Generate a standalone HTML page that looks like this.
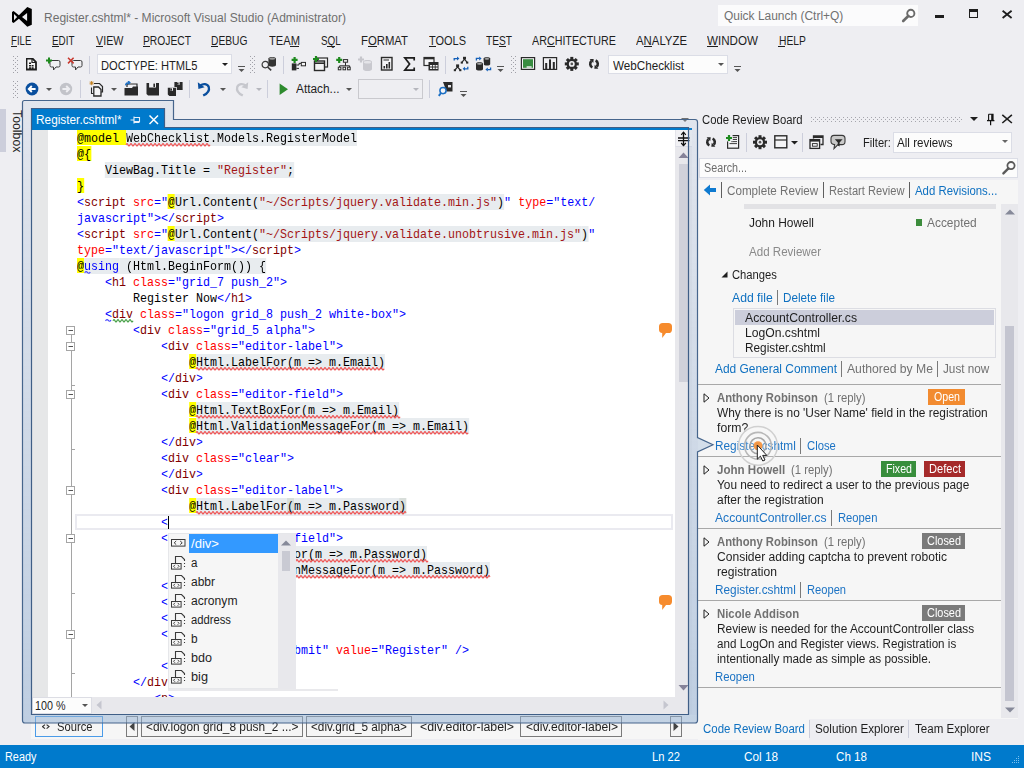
<!DOCTYPE html>
<html><head><meta charset="utf-8"><title>Register.cshtml - Microsoft Visual Studio</title>
<style>
html,body{margin:0;padding:0}
body{width:1024px;height:768px;overflow:hidden;background:#eeeef2;position:relative;font-family:"Liberation Sans",sans-serif;}
.t{position:absolute;white-space:nowrap;line-height:1;transform-origin:0 0;display:block}
.r{position:absolute;box-sizing:border-box}
.cl{position:absolute;left:77px;height:16px;line-height:16px;white-space:pre;font-family:"Liberation Mono",monospace;font-size:13px;transform-origin:0 0;transform:scaleX(0.8974);color:#000}
.cl span{display:inline-block;height:16px;vertical-align:top;line-height:18px;overflow:hidden}
.y{background:#ffff00;height:15px !important}.g{background:#e8ecef}.h{background:#d8deda}
.b{color:#0000ff}.m{color:#800000}.a{color:#ff0000}.s{color:#a31515}
</style></head>
<body>
<svg class="r" style="left:10px;top:5px" width="24" height="24" viewBox="0 0 24 24"><path d="M2 7 L3.6 6 L8.9 10.3 L17.3 1.9 L21.8 4 V19.7 L17.3 21.8 L8.9 13.7 L3.6 18 L2 17 Z M4 9.1 L7.1 12 L4 15.2 Z M12 12 L17.1 8.1 V16.1 Z" fill="#000" fill-rule="evenodd"/></svg>
<span class="t" style="left:44.3px;top:12.00px;font-size:12.5px;color:#6e6e6e;transform:scaleX(0.9625);">Register.cshtml* - Microsoft Visual Studio (Administrator)</span>
<div class="r" style="left:718px;top:5px;width:200px;height:21px;background:#fbfbfc;"></div>
<span class="t" style="left:723.7px;top:10.00px;font-size:12.5px;color:#717171;transform:scaleX(0.9568);">Quick Launch (Ctrl+Q)</span>
<svg class="r" style="left:901px;top:8px" width="16" height="15" viewBox="0 0 16 15"><circle cx="9.8" cy="5.4" r="3.6" fill="none" stroke="#6a6a6a" stroke-width="1.9"/><path d="M7.3 8 L2.2 13" stroke="#6a6a6a" stroke-width="2.6" stroke-linecap="round"/></svg>
<div class="r" style="left:935px;top:15px;width:9px;height:3px;background:#1e1e1e;"></div>
<div class="r" style="left:969px;top:9px;width:9px;height:9px;background:transparent;border:1px solid #1e1e1e;border-top:3px solid #1e1e1e"></div>
<svg class="r" style="left:1001px;top:10px" width="12" height="9" viewBox="0 0 12 9"><path d="M1.6 0.8 L10.6 8 M10.6 0.8 L1.6 8" stroke="#1e1e1e" stroke-width="1.8"/></svg>
<span class="t" style="left:11.3px;top:35.00px;font-size:12.5px;color:#1e1e1e;transform:scaleX(0.7697);">FILE</span>
<div class="r" style="left:11px;top:46px;width:6px;height:1px;background:#1e1e1e;"></div>
<span class="t" style="left:52.0px;top:35.00px;font-size:12.5px;color:#1e1e1e;transform:scaleX(0.7895);">EDIT</span>
<div class="r" style="left:52px;top:46px;width:7px;height:1px;background:#1e1e1e;"></div>
<span class="t" style="left:95.6px;top:35.00px;font-size:12.5px;color:#1e1e1e;transform:scaleX(0.8579);">VIEW</span>
<div class="r" style="left:96px;top:46px;width:7px;height:1px;background:#1e1e1e;"></div>
<span class="t" style="left:143.0px;top:35.00px;font-size:12.5px;color:#1e1e1e;transform:scaleX(0.8232);">PROJECT</span>
<div class="r" style="left:143px;top:46px;width:7px;height:1px;background:#1e1e1e;"></div>
<span class="t" style="left:211.0px;top:35.00px;font-size:12.5px;color:#1e1e1e;transform:scaleX(0.8214);">DEBUG</span>
<div class="r" style="left:211px;top:46px;width:7px;height:1px;background:#1e1e1e;"></div>
<span class="t" style="left:268.6px;top:35.00px;font-size:12.5px;color:#1e1e1e;transform:scaleX(0.8921);">TEAM</span>
<div class="r" style="left:290px;top:46px;width:9px;height:1px;background:#1e1e1e;"></div>
<span class="t" style="left:320.7px;top:35.00px;font-size:12.5px;color:#1e1e1e;transform:scaleX(0.7880);">SQL</span>
<div class="r" style="left:327px;top:46px;width:8px;height:1px;background:#1e1e1e;"></div>
<span class="t" style="left:361.0px;top:35.00px;font-size:12.5px;color:#1e1e1e;transform:scaleX(0.9060);">FORMAT</span>
<div class="r" style="left:368px;top:46px;width:9px;height:1px;background:#1e1e1e;"></div>
<span class="t" style="left:429.0px;top:35.00px;font-size:12.5px;color:#1e1e1e;transform:scaleX(0.8783);">TOOLS</span>
<div class="r" style="left:429px;top:46px;width:7px;height:1px;background:#1e1e1e;"></div>
<span class="t" style="left:486.0px;top:35.00px;font-size:12.5px;color:#1e1e1e;transform:scaleX(0.8141);">TEST</span>
<div class="r" style="left:499px;top:46px;width:7px;height:1px;background:#1e1e1e;"></div>
<span class="t" style="left:532.0px;top:35.00px;font-size:12.5px;color:#1e1e1e;transform:scaleX(0.8577);">ARCHITECTURE</span>
<div class="r" style="left:547px;top:46px;width:8px;height:1px;background:#1e1e1e;"></div>
<span class="t" style="left:636.0px;top:35.00px;font-size:12.5px;color:#1e1e1e;transform:scaleX(0.9097);">ANALYZE</span>
<div class="r" style="left:644px;top:46px;width:8px;height:1px;background:#1e1e1e;"></div>
<span class="t" style="left:707.0px;top:35.00px;font-size:12.5px;color:#1e1e1e;transform:scaleX(0.9294);">WINDOW</span>
<div class="r" style="left:707px;top:46px;width:11px;height:1px;background:#1e1e1e;"></div>
<span class="t" style="left:778.5px;top:35.00px;font-size:12.5px;color:#1e1e1e;transform:scaleX(0.8245);">HELP</span>
<div class="r" style="left:778px;top:46px;width:7px;height:1px;background:#1e1e1e;"></div>
<svg class="r" style="left:13px;top:56px" width="6" height="18" viewBox="0 0 6 18"><rect x="0" y="0" width="1" height="1" fill="#a0a0a8"/><rect x="4" y="0" width="1" height="1" fill="#a0a0a8"/><rect x="2" y="2" width="1" height="1" fill="#a0a0a8"/><rect x="0" y="4" width="1" height="1" fill="#a0a0a8"/><rect x="4" y="4" width="1" height="1" fill="#a0a0a8"/><rect x="2" y="6" width="1" height="1" fill="#a0a0a8"/><rect x="0" y="8" width="1" height="1" fill="#a0a0a8"/><rect x="4" y="8" width="1" height="1" fill="#a0a0a8"/><rect x="2" y="10" width="1" height="1" fill="#a0a0a8"/><rect x="0" y="12" width="1" height="1" fill="#a0a0a8"/><rect x="4" y="12" width="1" height="1" fill="#a0a0a8"/><rect x="2" y="14" width="1" height="1" fill="#a0a0a8"/><rect x="0" y="16" width="1" height="1" fill="#a0a0a8"/><rect x="4" y="16" width="1" height="1" fill="#a0a0a8"/></svg>
<svg class="r" style="left:26px;top:58px" width="11" height="13" viewBox="0 0 11 13"><path d="M0.5 0.5 H6.5 L10 4 V11.5 H0.5 Z" fill="#f6f6f6" stroke="#1e1e1e" stroke-width="1.8"/><path d="M6 0.5 V4.5 H10" fill="none" stroke="#1e1e1e" stroke-width="1.2"/><path d="M3 4.5h2v1.6h-2z M3 7h2v1.6h-2z M5.6 7h2v1.6h-2z M3 9.3h2v1.6h-2z M5.6 9.3h2v1.6h-2z" fill="#1e1e1e"/></svg>
<svg class="r" style="left:45px;top:57px" width="17" height="15" viewBox="0 0 17 15"><path d="M6.5 3.5 H13.5 Q15.0 3.5 15.0 5.0 V8.5 Q15.0 10.0 13.5 10.0 H11.0 L8.5 13.0 V10.0 H6.5 Q5.0 10.0 5.0 8.5 V5.0 Q5.0 3.5 6.5 3.5 Z" fill="#f0f0f3" stroke="#3c3c3c" stroke-width="1"/><path d="M1 3.5 H7 M4 0.5 V6.5" stroke="#1e8a1e" stroke-width="2"/></svg>
<svg class="r" style="left:67px;top:57px" width="17" height="15" viewBox="0 0 17 15"><path d="M6.5 3.5 H13.5 Q15.0 3.5 15.0 5.0 V8.5 Q15.0 10.0 13.5 10.0 H11.0 L8.5 13.0 V10.0 H6.5 Q5.0 10.0 5.0 8.5 V5.0 Q5.0 3.5 6.5 3.5 Z" fill="#f0f0f3" stroke="#3c3c3c" stroke-width="1"/><path d="M1 0.8 L6.6 6.4 M6.6 0.8 L1 6.4" stroke="#c8372d" stroke-width="1.5"/></svg>
<div class="r" style="left:89px;top:56px;width:1px;height:18px;background:#cccedb;"></div>
<div class="r" style="left:97px;top:54px;width:135px;height:20px;background:#fcfcfc;border:1px solid #dbdde6"></div>
<span class="t" style="left:101.0px;top:60.00px;font-size:12.5px;color:#1e1e1e;transform:scaleX(0.8904);">DOCTYPE: HTML5</span>
<svg class="r" style="left:222px;top:63px" width="6" height="4" viewBox="0 0 6 4"><path d="M0 0 H6 L3.0 3.0 Z" fill="#1e1e1e"/></svg>
<svg class="r" style="left:238px;top:66px" width="8" height="8" viewBox="0 0 8 8"><path d="M0 0.5 H7" stroke="#555" stroke-width="1"/><path d="M0.5 3 H6.5 L3.5 6 Z" fill="#555"/></svg>
<svg class="r" style="left:250px;top:56px" width="6" height="18" viewBox="0 0 6 18"><rect x="0" y="0" width="1" height="1" fill="#a0a0a8"/><rect x="4" y="0" width="1" height="1" fill="#a0a0a8"/><rect x="2" y="2" width="1" height="1" fill="#a0a0a8"/><rect x="0" y="4" width="1" height="1" fill="#a0a0a8"/><rect x="4" y="4" width="1" height="1" fill="#a0a0a8"/><rect x="2" y="6" width="1" height="1" fill="#a0a0a8"/><rect x="0" y="8" width="1" height="1" fill="#a0a0a8"/><rect x="4" y="8" width="1" height="1" fill="#a0a0a8"/><rect x="2" y="10" width="1" height="1" fill="#a0a0a8"/><rect x="0" y="12" width="1" height="1" fill="#a0a0a8"/><rect x="4" y="12" width="1" height="1" fill="#a0a0a8"/><rect x="2" y="14" width="1" height="1" fill="#a0a0a8"/><rect x="0" y="16" width="1" height="1" fill="#a0a0a8"/><rect x="4" y="16" width="1" height="1" fill="#a0a0a8"/></svg>
<svg class="r" style="left:261px;top:56px" width="16" height="16" viewBox="0 0 16 16"><path d="M7.4 2.6 C7.4 1.4 9 0.9 11.2 0.9 C13.4 0.9 15 1.4 15 2.6 V9 C15 10.2 13.4 10.7 11.2 10.7 C9 10.7 7.4 10.2 7.4 9 Z" fill="#333"/><ellipse cx="11.2" cy="2.7" rx="3" ry="1.1" fill="#9a9a9a"/><circle cx="4.3" cy="8.6" r="3.2" fill="#efeff2" stroke="#3a3a3a" stroke-width="1.2"/><path d="M6.6 11 L10.2 14.4" stroke="#3a3a3a" stroke-width="1.6"/></svg>
<div class="r" style="left:283px;top:56px;width:1px;height:18px;background:#cccedb;"></div>
<svg class="r" style="left:291px;top:56px" width="16" height="16" viewBox="0 0 16 16"><path d="M0.6 3.9 H6.6 M3.6 0.8999999999999999 V6.9" stroke="#1e8a1e" stroke-width="2.2"/><rect x="0.8" y="7.4" width="4.6" height="7" fill="#2a2a2a"/><path d="M5.4 9 H8 V7.4 H10 M5.4 12.4 H8" stroke="#2a2a2a" fill="none" stroke-width="1"/><rect x="10.3" y="6.4" width="4.2" height="3.4" fill="#f4f4f6" stroke="#2a2a2a" stroke-width="1"/></svg>
<svg class="r" style="left:313px;top:56px" width="16" height="16" viewBox="0 0 16 16"><rect x="4.5" y="2" width="10" height="9" fill="#f4f4f6" stroke="#2a2a2a" stroke-width="1.2"/><rect x="1.5" y="5" width="10" height="9.5" fill="#f4f4f6" stroke="#2a2a2a" stroke-width="1.4"/><path d="M2 7.2 H11" stroke="#2a2a2a" stroke-width="1.6"/><path d="M0 3.0 H6 M3 0.0 V6.0" stroke="#1e8a1e" stroke-width="2.2"/></svg>
<svg class="r" style="left:336px;top:56px" width="15" height="16" viewBox="0 0 15 16"><path d="M0.2 3.9 H6.2 M3.2 0.8999999999999999 V6.9" stroke="#1e8a1e" stroke-width="2.2"/><rect x="7.4" y="3.6" width="4.2" height="2.6" fill="#f4f4f6" stroke="#2a2a2a" stroke-width="1"/><path d="M9.5 6.4 V9.8 M3.6 11 V9.8 H13.6 V11" stroke="#2a2a2a" fill="none" stroke-width="1"/><rect x="2.3" y="11.2" width="2.6" height="2.6" fill="#f4f4f6" stroke="#2a2a2a" stroke-width="1"/><rect x="7" y="11.2" width="2.6" height="2.6" fill="#f4f4f6" stroke="#2a2a2a" stroke-width="1"/><rect x="11.6" y="11.2" width="2.6" height="2.6" fill="#f4f4f6" stroke="#2a2a2a" stroke-width="1"/></svg>
<svg class="r" style="left:358px;top:56px" width="15" height="16" viewBox="0 0 15 16"><path d="M0 3.5 H6 M3 0.5 V6.5" stroke="#c6c6cc" stroke-width="2.2"/><path d="M5 6 C5 4.6 7 4 9.5 4 C12 4 14 4.6 14 6 V13 C14 14.4 12 15 9.5 15 C7 15 5 14.4 5 13 Z" fill="#c9c9cf"/><ellipse cx="9.5" cy="6.2" rx="3.7" ry="1.3" fill="#e4e4e8"/></svg>
<svg class="r" style="left:380px;top:56px" width="14" height="16" viewBox="0 0 14 16"><rect x="1.5" y="1.5" width="10.5" height="12.5" fill="#f4f4f6" stroke="#2a2a2a" stroke-width="1.4"/><path d="M3.5 4 H9" stroke="#2a2a2a"/><rect x="3.5" y="10" width="1.6" height="2.5" fill="#2a2a2a"/><rect x="6" y="8" width="1.6" height="4.5" fill="#2a2a2a"/><rect x="8.5" y="6" width="1.6" height="6.5" fill="#2a2a2a"/></svg>
<svg class="r" style="left:403px;top:56px" width="13" height="16" viewBox="0 0 13 16"><path d="M11.2 4.4 V1.8 H1.8 L6.6 8 L1.8 14.2 H11.2 V11.6" fill="none" stroke="#1e1e1e" stroke-width="1.7"/></svg>
<svg class="r" style="left:423px;top:56px" width="17" height="16" viewBox="0 0 17 16"><rect x="1" y="1.5" width="10" height="8" fill="#f4f4f6" stroke="#2a2a2a" stroke-width="1.2"/><path d="M1 2.4 H11" stroke="#2a2a2a" stroke-width="1.8"/><rect x="5.5" y="6" width="10" height="8.5" fill="#2a2a2a"/><path d="M7 9h2v1.4h-2z M9.8 9h2v1.4h-2z M12.6 9h2v1.4h-2z M7 11.6h2v1.4h-2z M9.8 11.6h2v1.4h-2z M12.6 11.6h2v1.4h-2z" fill="#f4f4f6"/></svg>
<div class="r" style="left:445px;top:56px;width:1px;height:18px;background:#cccedb;"></div>
<svg class="r" style="left:453px;top:56px" width="16" height="16" viewBox="0 0 16 16"><rect x="10.0" y="0.8" width="3" height="2.6" fill="#2a2a2a"/><path d="M11.5 3.2 L8.9 6.3999999999999995 M11.5 3.2 L14.1 6.3999999999999995" stroke="#2a2a2a" stroke-width="1.2" fill="none"/><rect x="7.7" y="5.6" width="2.2" height="2" fill="#2a2a2a"/><rect x="13.1" y="5.6" width="2.2" height="2" fill="#2a2a2a"/><rect x="3.0999999999999996" y="8.4" width="3" height="2.6" fill="#2a2a2a"/><path d="M4.6 10.8 L1.9999999999999996 14.0 M4.6 10.8 L7.199999999999999 14.0" stroke="#2a2a2a" stroke-width="1.2" fill="none"/><rect x="0.7999999999999998" y="13.2" width="2.2" height="2" fill="#2a2a2a"/><rect x="6.199999999999999" y="13.2" width="2.2" height="2" fill="#2a2a2a"/><path d="M1.2 4.6 V2.5999999999999996 H4.2" fill="none" stroke="#1560b8" stroke-width="1.3"/><path d="M4.0 0.5999999999999999 L6.4 2.5999999999999996 L4.0 4.6 Z" fill="#1560b8"/><path d="M14.8 10.8 V12.8 H11.8" fill="none" stroke="#1560b8" stroke-width="1.3"/><path d="M12.0 14.8 L9.600000000000001 12.8 L12.0 10.8 Z" fill="#1560b8"/></svg>
<svg class="r" style="left:475px;top:56px" width="17" height="16" viewBox="0 0 17 16"><path d="M8.6 2.5999999999999996 C8.6 0.7999999999999999 15.2 0.7999999999999999 15.2 2.5999999999999996 V8.2 C15.2 10.0 8.6 10.0 8.6 8.2 Z" fill="#2a2a2a"/><ellipse cx="11.899999999999999" cy="2.8" rx="2.4" ry="0.9" fill="#a9a9a9"/><rect x="0.4" y="5.6" width="8.4" height="9.6" fill="#eeeef2"/><path d="M1 7.6 C1 5.8 8 5.8 8 7.6 V13.2 C8 15.0 1 15.0 1 13.2 Z" fill="#2a2a2a"/><ellipse cx="4.5" cy="7.800000000000001" rx="2.6" ry="0.9" fill="#a9a9a9"/><path d="M1.4 4.4 V2.4 H4.4" fill="none" stroke="#1560b8" stroke-width="1.3"/><path d="M4.199999999999999 0.3999999999999999 L6.6 2.4 L4.199999999999999 4.4 Z" fill="#1560b8"/><path d="M15.6 11.600000000000001 V13.600000000000001 H12.6" fill="none" stroke="#1560b8" stroke-width="1.3"/><path d="M12.8 15.600000000000001 L10.399999999999999 13.600000000000001 L12.8 11.600000000000001 Z" fill="#1560b8"/></svg>
<svg class="r" style="left:497px;top:66px" width="8" height="8" viewBox="0 0 8 8"><path d="M0 0.5 H7" stroke="#555" stroke-width="1"/><path d="M0.5 3 H6.5 L3.5 6 Z" fill="#555"/></svg>
<svg class="r" style="left:511px;top:56px" width="6" height="18" viewBox="0 0 6 18"><rect x="0" y="0" width="1" height="1" fill="#a0a0a8"/><rect x="4" y="0" width="1" height="1" fill="#a0a0a8"/><rect x="2" y="2" width="1" height="1" fill="#a0a0a8"/><rect x="0" y="4" width="1" height="1" fill="#a0a0a8"/><rect x="4" y="4" width="1" height="1" fill="#a0a0a8"/><rect x="2" y="6" width="1" height="1" fill="#a0a0a8"/><rect x="0" y="8" width="1" height="1" fill="#a0a0a8"/><rect x="4" y="8" width="1" height="1" fill="#a0a0a8"/><rect x="2" y="10" width="1" height="1" fill="#a0a0a8"/><rect x="0" y="12" width="1" height="1" fill="#a0a0a8"/><rect x="4" y="12" width="1" height="1" fill="#a0a0a8"/><rect x="2" y="14" width="1" height="1" fill="#a0a0a8"/><rect x="0" y="16" width="1" height="1" fill="#a0a0a8"/><rect x="4" y="16" width="1" height="1" fill="#a0a0a8"/></svg>
<svg class="r" style="left:520px;top:56px" width="16" height="15" viewBox="0 0 16 15"><rect x="1.4" y="1.6" width="13.2" height="11.8" fill="#f4f4f6" stroke="#2a2a2a" stroke-width="1.2"/><rect x="3" y="3.2" width="10" height="8.6" fill="#388c40"/><path d="M6.6 11 H11.6" stroke="#f4f4f6" stroke-width="1.4"/></svg>
<svg class="r" style="left:542px;top:56px" width="16" height="15" viewBox="0 0 16 15"><rect x="1.4" y="1.6" width="13.2" height="11.8" fill="#f0f0f3" stroke="#2a2a2a" stroke-width="1.2"/><rect x="3.2" y="7" width="2" height="6" fill="#2a2a2a"/><rect x="7" y="3.4" width="2" height="9.6" fill="#2a2a2a"/><rect x="10.8" y="6" width="2" height="7" fill="#2a2a2a"/></svg>
<svg class="r" style="left:564px;top:56px" width="16" height="16" viewBox="0 0 16 16"><rect x="-1.5" y="-7" width="3" height="14" fill="#2a2a2a" transform="translate(7.8 7.9) rotate(0.0)"/><rect x="-1.5" y="-7" width="3" height="14" fill="#2a2a2a" transform="translate(7.8 7.9) rotate(45.0)"/><rect x="-1.5" y="-7" width="3" height="14" fill="#2a2a2a" transform="translate(7.8 7.9) rotate(90.0)"/><rect x="-1.5" y="-7" width="3" height="14" fill="#2a2a2a" transform="translate(7.8 7.9) rotate(135.0)"/><circle cx="7.8" cy="7.9" r="5.18" fill="#2a2a2a"/><circle cx="7.8" cy="7.9" r="2.94" fill="#f1f1f4"/><circle cx="7.8" cy="7.9" r="1.33" fill="#555"/></svg>
<svg class="r" style="left:587px;top:57px" width="14" height="14" viewBox="0 0 14 14"><path d="M5.39 10.34 A3.8 3.8 0 0 1 4.46 4.08" fill="none" stroke="#2a2a2a" stroke-width="2.6"/><path d="M2.65 2.07 L6.69 2.07 L6.26 6.08 Z" fill="#2a2a2a"/><path d="M8.61 3.46 A3.8 3.8 0 0 1 9.54 9.72" fill="none" stroke="#2a2a2a" stroke-width="2.6"/><path d="M11.35 11.73 L7.31 11.73 L7.74 7.72 Z" fill="#2a2a2a"/></svg>
<div class="r" style="left:608px;top:55px;width:120px;height:19px;background:#fcfcfc;border:1px solid #dbdde6"></div>
<span class="t" style="left:612.6px;top:60.00px;font-size:12.5px;color:#1e1e1e;transform:scaleX(0.9332);">WebChecklist</span>
<svg class="r" style="left:718px;top:63px" width="6" height="4" viewBox="0 0 6 4"><path d="M0 0 H6 L3.0 3.0 Z" fill="#555"/></svg>
<svg class="r" style="left:734px;top:66px" width="8" height="8" viewBox="0 0 8 8"><path d="M0 0.5 H7" stroke="#555" stroke-width="1"/><path d="M0.5 3 H6.5 L3.5 6 Z" fill="#555"/></svg>
<svg class="r" style="left:13px;top:81px" width="6" height="18" viewBox="0 0 6 18"><rect x="0" y="0" width="1" height="1" fill="#a0a0a8"/><rect x="4" y="0" width="1" height="1" fill="#a0a0a8"/><rect x="2" y="2" width="1" height="1" fill="#a0a0a8"/><rect x="0" y="4" width="1" height="1" fill="#a0a0a8"/><rect x="4" y="4" width="1" height="1" fill="#a0a0a8"/><rect x="2" y="6" width="1" height="1" fill="#a0a0a8"/><rect x="0" y="8" width="1" height="1" fill="#a0a0a8"/><rect x="4" y="8" width="1" height="1" fill="#a0a0a8"/><rect x="2" y="10" width="1" height="1" fill="#a0a0a8"/><rect x="0" y="12" width="1" height="1" fill="#a0a0a8"/><rect x="4" y="12" width="1" height="1" fill="#a0a0a8"/><rect x="2" y="14" width="1" height="1" fill="#a0a0a8"/><rect x="0" y="16" width="1" height="1" fill="#a0a0a8"/><rect x="4" y="16" width="1" height="1" fill="#a0a0a8"/></svg>
<svg class="r" style="left:25px;top:82px" width="14" height="14" viewBox="0 0 14 14"><circle cx="7" cy="7" r="6.4" fill="#0a4f9e"/><path d="M10.6 7 H4.2 M6.8 4 L3.8 7 L6.8 10" stroke="#fff" stroke-width="1.9" fill="none"/></svg>
<svg class="r" style="left:46px;top:88px" width="6" height="4" viewBox="0 0 6 4"><path d="M0 0 H6 L3.0 3.0 Z" fill="#555"/></svg>
<svg class="r" style="left:59px;top:82px" width="14" height="14" viewBox="0 0 14 14"><circle cx="7" cy="7" r="6.2" fill="#c2c3c9"/><path d="M3.4 7 H9.8 M7.2 4 L10.2 7 L7.2 10" stroke="#eeeef2" stroke-width="1.9" fill="none"/></svg>
<div class="r" style="left:80px;top:80px;width:1px;height:18px;background:#cccedb;"></div>
<svg class="r" style="left:89px;top:81px" width="16" height="16" viewBox="0 0 16 16"><path d="M1.2 0.6 L4 3.6 M4 0.6 L1.2 3.6 M2.6 0 V4.2 M0.5 2.1 H4.7" stroke="#c27d1a" stroke-width="0.9"/><path d="M5 2.5 H10.5 L13.5 5.5 V11 H11" fill="none" stroke="#2a2a2a" stroke-width="1.2"/><path d="M4.8 6 H9.5 L12 8.5 V15 H4.8 Z" fill="#f4f4f6" stroke="#2a2a2a" stroke-width="1.3"/><path d="M2.5 6.5 V12.5 H4.5" fill="none" stroke="#2a2a2a" stroke-width="1.1"/></svg>
<svg class="r" style="left:111px;top:88px" width="6" height="4" viewBox="0 0 6 4"><path d="M0 0 H6 L3.0 3.0 Z" fill="#555"/></svg>
<svg class="r" style="left:123px;top:81px" width="17" height="16" viewBox="0 0 17 16"><path d="M1.5 7 H9 L10 5.5 H15 V14.5 H1.5 Z" fill="#2a2a2a"/><path d="M4 6 V3 H14 V6" fill="none" stroke="#2a2a2a" stroke-width="1.2"/><path d="M2.6 4.4 Q2.8 1.4 6.4 1.6 M5 0 L6.8 1.6 L5 3.2" stroke="#1b6fc4" fill="none" stroke-width="1.4"/></svg>
<svg class="r" style="left:146px;top:82px" width="14" height="14" viewBox="0 0 14 14"><path d="M0.5 1 H13.0 V13.5 H2.1 L0.5 11.9 Z" fill="#2a2a2a"/><rect x="3.1" y="1" width="6.9" height="4.5" fill="#f1f1f4"/><rect x="7.4" y="1.6" width="1.6" height="3.375" fill="#2a2a2a"/></svg>
<svg class="r" style="left:167px;top:81px" width="16" height="16" viewBox="0 0 16 16"><path d="M7.4 0.9 H15.6 V9.1 H9.0 L7.4 7.5 Z" fill="#2a2a2a"/><rect x="10.0" y="0.9" width="2.5999999999999996" height="2.9519999999999995" fill="#f1f1f4"/><rect x="10.0" y="1.5" width="1.6" height="2.214" fill="#2a2a2a"/><rect x="0" y="6" width="9.8" height="10" fill="#eeeef2"/><path d="M0.8 6.8 H9.0 V15.0 H2.4000000000000004 L0.8 13.4 Z" fill="#2a2a2a"/><rect x="3.4000000000000004" y="6.8" width="2.5999999999999996" height="2.9519999999999995" fill="#f1f1f4"/><rect x="3.4000000000000004" y="7.3999999999999995" width="1.6" height="2.214" fill="#2a2a2a"/></svg>
<div class="r" style="left:189px;top:80px;width:1px;height:18px;background:#cccedb;"></div>
<svg class="r" style="left:197px;top:81px" width="15" height="16" viewBox="0 0 15 16"><path d="M3.4 4.6 C6 2.4 10.6 2.6 11.8 6.2 C12.8 9.6 10 12.6 6.2 14.6" fill="none" stroke="#0a4f9e" stroke-width="2.3"/><path d="M0.8 1.2 L1.4 8 L7.6 6.2 Z" fill="#0a4f9e"/></svg>
<svg class="r" style="left:220px;top:88px" width="6" height="4" viewBox="0 0 6 4"><path d="M0 0 H6 L3.0 3.0 Z" fill="#555"/></svg>
<svg class="r" style="left:234px;top:81px" width="15" height="16" viewBox="0 0 15 16"><path d="M11.6 4.6 C9 2.4 4.4 2.6 3.2 6.2 C2.2 9.6 5 12.6 8.8 14.6" fill="none" stroke="#c6c7cd" stroke-width="2.3"/><path d="M14.2 1.2 L13.6 8 L7.4 6.2 Z" fill="#c6c7cd"/></svg>
<svg class="r" style="left:256px;top:88px" width="6" height="4" viewBox="0 0 6 4"><path d="M0 0 H6 L3.0 3.0 Z" fill="#b5b6bd"/></svg>
<div class="r" style="left:267px;top:80px;width:1px;height:18px;background:#cccedb;"></div>
<svg class="r" style="left:279px;top:83px" width="10" height="13" viewBox="0 0 10 13"><path d="M0.6 0.4 L9 6.2 L0.6 12 Z" fill="#2e8b2e"/></svg>
<span class="t" style="left:296.0px;top:83.00px;font-size:12.5px;color:#1e1e1e;transform:scaleX(0.9482);">Attach...</span>
<svg class="r" style="left:346px;top:88px" width="6" height="4" viewBox="0 0 6 4"><path d="M0 0 H6 L3.0 3.0 Z" fill="#555"/></svg>
<div class="r" style="left:358px;top:79px;width:65px;height:20px;background:#eeeef2;border:1px solid #c9c9ce"></div>
<svg class="r" style="left:413px;top:88px" width="6" height="4" viewBox="0 0 6 4"><path d="M0 0 H6 L3.0 3.0 Z" fill="#b5b6bd"/></svg>
<div class="r" style="left:429px;top:80px;width:1px;height:18px;background:#cccedb;"></div>
<svg class="r" style="left:438px;top:81px" width="16" height="16" viewBox="0 0 16 16"><path d="M5 1 H14.5 V10.5 H8.5 Z" fill="#2a2a2a"/><rect x="10" y="4" width="3" height="2.4" fill="#e8e8ec"/><circle cx="5" cy="9.6" r="3.1" fill="#f4f4f6" stroke="#1b6fc4" stroke-width="1.5"/><path d="M3 12 L0.8 14.8" stroke="#1b6fc4" stroke-width="2"/></svg>
<svg class="r" style="left:460px;top:91px" width="8" height="8" viewBox="0 0 8 8"><path d="M0 0.5 H7" stroke="#555" stroke-width="1"/><path d="M0.5 3 H6.5 L3.5 6 Z" fill="#555"/></svg>
<div class="r" style="left:0px;top:109px;width:6px;height:43px;background:#cccedb;"></div>
<span class="t" style="left:22.6px;top:109.6px;font-size:12.5px;color:#1e1e1e;transform-origin:0 0;transform:rotate(90deg) scaleX(0.9841)">Toolbox</span>
<div class="r" style="left:0px;top:745px;width:1024px;height:23px;background:#007acc;"></div>
<span class="t" style="left:4.8px;top:751.00px;font-size:12.5px;color:#fff;transform:scaleX(0.8692);">Ready</span>
<span class="t" style="left:652.0px;top:751.00px;font-size:12.5px;color:#fff;transform:scaleX(0.8942);">Ln 22</span>
<span class="t" style="left:744.0px;top:751.00px;font-size:12.5px;color:#fff;transform:scaleX(0.9412);">Col 18</span>
<span class="t" style="left:836.0px;top:751.00px;font-size:12.5px;color:#fff;transform:scaleX(0.9288);">Ch 18</span>
<span class="t" style="left:971.0px;top:751.00px;font-size:12.5px;color:#fff;transform:scaleX(0.9610);">INS</span>
<svg class="r" style="left:1010px;top:756px" width="10" height="8" viewBox="0 0 10 8"><rect x="8" y="0" width="1" height="1" fill="#7cc0ee"/><rect x="8" y="2" width="1" height="1" fill="#7cc0ee"/><rect x="6" y="2" width="1" height="1" fill="#7cc0ee"/><rect x="8" y="4" width="1" height="1" fill="#7cc0ee"/><rect x="6" y="4" width="1" height="1" fill="#7cc0ee"/><rect x="4" y="4" width="1" height="1" fill="#7cc0ee"/><rect x="8" y="6" width="1" height="1" fill="#7cc0ee"/><rect x="6" y="6" width="1" height="1" fill="#7cc0ee"/><rect x="4" y="6" width="1" height="1" fill="#7cc0ee"/><rect x="2" y="6" width="1" height="1" fill="#7cc0ee"/></svg>
<div class="r" style="left:32px;top:109px;width:133px;height:21px;background:#007acc;"></div>
<div class="r" style="left:32px;top:128px;width:657px;height:2px;background:#007acc;"></div>
<span class="t" style="left:36.0px;top:114.00px;font-size:12.5px;color:#fff;transform:scaleX(0.9467);">Register.cshtml*</span>
<svg class="r" style="left:130px;top:115px" width="11" height="10" viewBox="0 0 11 10"><path d="M0.5 5 H4 M4 1.5 V8.5 M4 2.5 H9.5 V6.5 H4 M4 7.4 H9.5" fill="none" stroke="#e6f0fa" stroke-width="1.1"/></svg>
<svg class="r" style="left:148px;top:114px" width="12" height="12" viewBox="0 0 12 12"><path d="M1.5 1.5 L10 10 M10 1.5 L1.5 10" stroke="#fff" stroke-width="1.5"/></svg>
<svg class="r" style="left:681px;top:118px" width="9" height="5" viewBox="0 0 9 5"><path d="M0 0 H8 L4 4 Z" fill="#717171"/></svg>
<div class="r" style="left:32px;top:130px;width:657px;height:584px;background:#ffffff;"></div>
<div class="r" style="left:32px;top:130px;width:16px;height:567px;background:#e6e7e8;"></div>
<div class="cl" style="top:130px"><span class="y">@model </span><span class="g">WebChecklist.Models.RegisterModel</span></div>
<div class="cl" style="top:146px"><span class="y">@{</span></div>
<div class="cl" style="top:162px">    <span class="g">ViewBag.Title = </span><span class="g s">"Register"</span><span class="g">;</span></div>
<div class="cl" style="top:178px"><span class="y">}</span></div>
<div class="cl" style="top:194px"><span class="b">&lt;</span><span class="m">script</span><span class="a"> src</span><span class="b">="</span><span class="y">@</span><span class="g">Url.Content(</span><span class="g s">"~/Scripts/jquery.validate.min.js"</span><span class="g">)</span><span class="b">"</span><span class="a"> type</span><span class="b">="text/</span></div>
<div class="cl" style="top:210px"><span class="b">javascript"&gt;&lt;/</span><span class="m">script</span><span class="b">&gt;</span></div>
<div class="cl" style="top:226px"><span class="b">&lt;</span><span class="m">script</span><span class="a"> src</span><span class="b">="</span><span class="y">@</span><span class="g">Url.Content(</span><span class="g s">"~/Scripts/jquery.validate.unobtrusive.min.js"</span><span class="g">)</span><span class="b">"</span></div>
<div class="cl" style="top:242px"><span class="a">type</span><span class="b">="text/javascript"&gt;&lt;/</span><span class="m">script</span><span class="b">&gt;</span></div>
<div class="cl" style="top:258px"><span class="y">@</span><span class="g b">using</span><span class="g"> (Html.BeginForm()) {</span></div>
<div class="cl" style="top:274px">    <span class="b">&lt;</span><span class="m">h1</span><span class="a"> class</span><span class="b">="grid_7 push_2"</span><span class="b">&gt;</span></div>
<div class="cl" style="top:290px">        <span>Register Now</span><span class="b">&lt;/</span><span class="m">h1</span><span class="b">&gt;</span></div>
<div class="cl" style="top:306px">    <span class="b">&lt;</span><span class="m">div</span><span class="a"> class</span><span class="b">="logon grid_8 push_2 white-box"</span><span class="b">&gt;</span></div>
<div class="cl" style="top:322px">        <span class="b">&lt;</span><span class="m">div</span><span class="a"> class</span><span class="b">="grid_5 alpha"</span><span class="b">&gt;</span></div>
<div class="cl" style="top:338px">            <span class="b">&lt;</span><span class="m">div</span><span class="a"> class</span><span class="b">="editor-label"</span><span class="b">&gt;</span></div>
<div class="cl" style="top:354px">                <span class="y">@</span><span class="g">Html.LabelFor(m =&gt; m.Email)</span></div>
<div class="cl" style="top:370px">            <span class="b">&lt;/</span><span class="m">div</span><span class="b">&gt;</span></div>
<div class="cl" style="top:386px">            <span class="b">&lt;</span><span class="m">div</span><span class="a"> class</span><span class="b">="editor-field"</span><span class="b">&gt;</span></div>
<div class="cl" style="top:402px">                <span class="y">@</span><span class="g">Html.TextBoxFor(m =&gt; m.Email)</span></div>
<div class="cl" style="top:418px">                <span class="y">@</span><span class="g">Html.ValidationMessageFor(m =&gt; m.Email)</span></div>
<div class="cl" style="top:434px">            <span class="b">&lt;/</span><span class="m">div</span><span class="b">&gt;</span></div>
<div class="cl" style="top:450px">            <span class="b">&lt;</span><span class="m">div</span><span class="a"> class</span><span class="b">="clear"</span><span class="b">&gt;</span></div>
<div class="cl" style="top:466px">            <span class="b">&lt;/</span><span class="m">div</span><span class="b">&gt;</span></div>
<div class="cl" style="top:482px">            <span class="b">&lt;</span><span class="m">div</span><span class="a"> class</span><span class="b">="editor-label"</span><span class="b">&gt;</span></div>
<div class="cl" style="top:498px">                <span class="y">@</span><span class="g">Html.LabelFor</span><span class="h">(</span><span class="g">m =&gt; m.Password</span><span class="h">)</span></div>
<div class="r" style="left:75px;top:514px;width:598px;height:16px;background:#fff;border:2px solid #eaeaf0"></div>
<div class="cl" style="top:514px">            <span class="b">&lt;</span></div>
<div class="r" style="left:168px;top:516px;width:1px;height:13px;background:#000;"></div>
<div class="cl" style="top:530px">            <span class="b">&lt;</span><span class="m">div</span><span class="a"> class</span><span class="b">="editor-field"</span><span class="b">&gt;</span></div>
<div class="cl" style="top:546px">                <span class="y">@</span><span class="g">Html.PasswordFor(m =&gt; m.Password)</span></div>
<div class="cl" style="top:562px">                <span class="y">@</span><span class="g">Html.ValidationMessageFor(m =&gt; m.Password)</span></div>
<div class="cl" style="top:578px">            <span class="b">&lt;/</span><span class="m">div</span><span class="b">&gt;</span></div>
<div class="cl" style="top:594px">            <span class="b">&lt;</span><span class="m">div</span><span class="a"> class</span><span class="b">="clear"</span><span class="b">&gt;</span></div>
<div class="cl" style="top:610px">            <span class="b">&lt;/</span><span class="m">div</span><span class="b">&gt;</span></div>
<div class="cl" style="top:626px">            <span class="b">&lt;</span><span class="m">p</span><span class="b">&gt;</span></div>
<div class="cl" style="top:642px">                <span class="b">&lt;</span><span class="m">input</span><span class="a"> type</span><span class="b">="submit"</span><span class="a"> value</span><span class="b">="Register"</span><span class="b"> /&gt;</span></div>
<div class="cl" style="top:658px">            <span class="b">&lt;/</span><span class="m">p</span><span class="b">&gt;</span></div>
<div class="cl" style="top:674px">        <span class="b">&lt;/</span><span class="m">div</span><span class="b">&gt;</span></div>
<div class="cl" style="top:690px">           <span class="b">&lt;</span><span class="m">p</span><span class="b">&gt;</span></div>
<svg class="r" style="left:0;top:0" width="1024" height="768"><path d="M126 144.8 q1 -2.4 2 0 t2 0 t2 0 t2 0 t2 0 t2 0 t2 0 t2 0 t2 0 t2 0 t2 0 t2 0 t2 0 t2 0 t2 0 t2 0 t2 0 t2 0 t2 0 t2 0 t2 0 t2 0 t2 0 t2 0 t2 0 t2 0 t2 0 t2 0 t2 0 t2 0 t2 0 t2 0 t2 0 t2 0 t2 0 t2 0 t2 0 t2 0 t2 0 t2 0 t2 0 t2 0" fill="none" stroke="#f04a4a" stroke-width="1.15"/><path d="M196 368.8 q1 -2.4 2 0 t2 0 t2 0 t2 0 t2 0 t2 0 t2 0 t2 0 t2 0 t2 0 t2 0 t2 0 t2 0 t2 0 t2 0 t2 0 t2 0 t2 0 t2 0 t2 0 t2 0 t2 0 t2 0 t2 0 t2 0 t2 0 t2 0 t2 0 t2 0 t2 0 t2 0 t2 0 t2 0 t2 0 t2 0 t2 0 t2 0 t2 0 t2 0 t2 0 t2 0 t2 0 t2 0 t2 0 t2 0 t2 0 t2 0 t2 0 t2 0 t2 0 t2 0 t2 0 t2 0 t2 0 t2 0 t2 0 t2 0 t2 0 t2 0 t2 0 t2 0 t2 0 t2 0 t2 0 t2 0 t2 0 t2 0 t2 0 t2 0 t2 0 t2 0 t2 0 t2 0 t2 0 t2 0 t2 0 t2 0 t2 0 t2 0 t2 0 t2 0 t2 0 t2 0 t2 0 t2 0 t2 0 t2 0 t2 0 t2 0 t2 0 t2 0 t2 0 t2 0 t2 0" fill="none" stroke="#f04a4a" stroke-width="1.15"/><path d="M196 416.8 q1 -2.4 2 0 t2 0 t2 0 t2 0 t2 0 t2 0 t2 0 t2 0 t2 0 t2 0 t2 0 t2 0 t2 0 t2 0 t2 0 t2 0 t2 0 t2 0 t2 0 t2 0 t2 0 t2 0 t2 0 t2 0 t2 0 t2 0 t2 0 t2 0 t2 0 t2 0 t2 0 t2 0 t2 0 t2 0 t2 0 t2 0 t2 0 t2 0 t2 0 t2 0 t2 0 t2 0 t2 0 t2 0 t2 0 t2 0 t2 0 t2 0 t2 0 t2 0 t2 0 t2 0 t2 0 t2 0 t2 0 t2 0 t2 0 t2 0 t2 0 t2 0 t2 0 t2 0 t2 0 t2 0 t2 0 t2 0 t2 0 t2 0 t2 0 t2 0 t2 0 t2 0 t2 0 t2 0 t2 0 t2 0 t2 0 t2 0 t2 0 t2 0 t2 0 t2 0 t2 0 t2 0 t2 0 t2 0 t2 0 t2 0 t2 0 t2 0 t2 0 t2 0 t2 0 t2 0 t2 0 t2 0 t2 0 t2 0 t2 0 t2 0 t2 0 t2 0" fill="none" stroke="#f04a4a" stroke-width="1.15"/><path d="M196 432.8 q1 -2.4 2 0 t2 0 t2 0 t2 0 t2 0 t2 0 t2 0 t2 0 t2 0 t2 0 t2 0 t2 0 t2 0 t2 0 t2 0 t2 0 t2 0 t2 0 t2 0 t2 0 t2 0 t2 0 t2 0 t2 0 t2 0 t2 0 t2 0 t2 0 t2 0 t2 0 t2 0 t2 0 t2 0 t2 0 t2 0 t2 0 t2 0 t2 0 t2 0 t2 0 t2 0 t2 0 t2 0 t2 0 t2 0 t2 0 t2 0 t2 0 t2 0 t2 0 t2 0 t2 0 t2 0 t2 0 t2 0 t2 0 t2 0 t2 0 t2 0 t2 0 t2 0 t2 0 t2 0 t2 0 t2 0 t2 0 t2 0 t2 0 t2 0 t2 0 t2 0 t2 0 t2 0 t2 0 t2 0 t2 0 t2 0 t2 0 t2 0 t2 0 t2 0 t2 0 t2 0 t2 0 t2 0 t2 0 t2 0 t2 0 t2 0 t2 0 t2 0 t2 0 t2 0 t2 0 t2 0 t2 0 t2 0 t2 0 t2 0 t2 0 t2 0 t2 0 t2 0 t2 0 t2 0 t2 0 t2 0 t2 0 t2 0 t2 0 t2 0 t2 0 t2 0 t2 0 t2 0 t2 0 t2 0 t2 0 t2 0 t2 0 t2 0 t2 0 t2 0 t2 0 t2 0 t2 0 t2 0 t2 0 t2 0 t2 0 t2 0 t2 0 t2 0 t2 0 t2 0 t2 0" fill="none" stroke="#f04a4a" stroke-width="1.15"/><path d="M196 512.8 q1 -2.4 2 0 t2 0 t2 0 t2 0 t2 0 t2 0 t2 0 t2 0 t2 0 t2 0 t2 0 t2 0 t2 0 t2 0 t2 0 t2 0 t2 0 t2 0 t2 0 t2 0 t2 0 t2 0 t2 0 t2 0 t2 0 t2 0 t2 0 t2 0 t2 0 t2 0 t2 0 t2 0 t2 0 t2 0 t2 0 t2 0 t2 0 t2 0 t2 0 t2 0 t2 0 t2 0 t2 0 t2 0 t2 0 t2 0 t2 0 t2 0 t2 0 t2 0 t2 0 t2 0 t2 0 t2 0 t2 0 t2 0 t2 0 t2 0 t2 0 t2 0 t2 0 t2 0 t2 0 t2 0 t2 0 t2 0 t2 0 t2 0 t2 0 t2 0 t2 0 t2 0 t2 0 t2 0 t2 0 t2 0 t2 0 t2 0 t2 0 t2 0 t2 0 t2 0 t2 0 t2 0 t2 0 t2 0 t2 0 t2 0 t2 0 t2 0 t2 0 t2 0 t2 0 t2 0 t2 0 t2 0 t2 0 t2 0 t2 0 t2 0 t2 0 t2 0 t2 0 t2 0 t2 0" fill="none" stroke="#f04a4a" stroke-width="1.15"/><path d="M196 560.8 q1 -2.4 2 0 t2 0 t2 0 t2 0 t2 0 t2 0 t2 0 t2 0 t2 0 t2 0 t2 0 t2 0 t2 0 t2 0 t2 0 t2 0 t2 0 t2 0 t2 0 t2 0 t2 0 t2 0 t2 0 t2 0 t2 0 t2 0 t2 0 t2 0 t2 0 t2 0 t2 0 t2 0 t2 0 t2 0 t2 0 t2 0 t2 0 t2 0 t2 0 t2 0 t2 0 t2 0 t2 0 t2 0 t2 0 t2 0 t2 0 t2 0 t2 0 t2 0 t2 0 t2 0 t2 0 t2 0 t2 0 t2 0 t2 0 t2 0 t2 0 t2 0 t2 0 t2 0 t2 0 t2 0 t2 0 t2 0 t2 0 t2 0 t2 0 t2 0 t2 0 t2 0 t2 0 t2 0 t2 0 t2 0 t2 0 t2 0 t2 0 t2 0 t2 0 t2 0 t2 0 t2 0 t2 0 t2 0 t2 0 t2 0 t2 0 t2 0 t2 0 t2 0 t2 0 t2 0 t2 0 t2 0 t2 0 t2 0 t2 0 t2 0 t2 0 t2 0 t2 0 t2 0 t2 0 t2 0 t2 0 t2 0 t2 0 t2 0 t2 0 t2 0 t2 0 t2 0 t2 0 t2 0" fill="none" stroke="#f04a4a" stroke-width="1.15"/><path d="M196 576.8 q1 -2.4 2 0 t2 0 t2 0 t2 0 t2 0 t2 0 t2 0 t2 0 t2 0 t2 0 t2 0 t2 0 t2 0 t2 0 t2 0 t2 0 t2 0 t2 0 t2 0 t2 0 t2 0 t2 0 t2 0 t2 0 t2 0 t2 0 t2 0 t2 0 t2 0 t2 0 t2 0 t2 0 t2 0 t2 0 t2 0 t2 0 t2 0 t2 0 t2 0 t2 0 t2 0 t2 0 t2 0 t2 0 t2 0 t2 0 t2 0 t2 0 t2 0 t2 0 t2 0 t2 0 t2 0 t2 0 t2 0 t2 0 t2 0 t2 0 t2 0 t2 0 t2 0 t2 0 t2 0 t2 0 t2 0 t2 0 t2 0 t2 0 t2 0 t2 0 t2 0 t2 0 t2 0 t2 0 t2 0 t2 0 t2 0 t2 0 t2 0 t2 0 t2 0 t2 0 t2 0 t2 0 t2 0 t2 0 t2 0 t2 0 t2 0 t2 0 t2 0 t2 0 t2 0 t2 0 t2 0 t2 0 t2 0 t2 0 t2 0 t2 0 t2 0 t2 0 t2 0 t2 0 t2 0 t2 0 t2 0 t2 0 t2 0 t2 0 t2 0 t2 0 t2 0 t2 0 t2 0 t2 0 t2 0 t2 0 t2 0 t2 0 t2 0 t2 0 t2 0 t2 0 t2 0 t2 0 t2 0 t2 0 t2 0 t2 0 t2 0 t2 0 t2 0 t2 0 t2 0 t2 0 t2 0 t2 0 t2 0 t2 0 t2 0 t2 0 t2 0 t2 0 t2 0 t2 0 t2 0" fill="none" stroke="#f04a4a" stroke-width="1.15"/><path d="M113 320.8 q1 -2.4 2 0 t2 0 t2 0 t2 0 t2 0 t2 0 t2 0 t2 0 t2 0 t2 0" fill="none" stroke="#3c9a3c" stroke-width="1.15"/><path d="M105.5 320.8 Q107 318.6 108.3 320.4 T111 320.2" fill="none" stroke="#4a4aff" stroke-width="1.2"/><path d="M84.6 272.8 Q86 270.6 87.4 272.4 T90.3 272.2" fill="none" stroke="#4a4aff" stroke-width="1.2"/></svg>
<svg class="r" style="left:0;top:0" width="1024" height="768"><path d="M71.5 330 V697" stroke="#a5a5a5" stroke-width="1"/><rect x="66.5" y="326.5" width="8" height="8" fill="#fff" stroke="#a5a5a5"/><path d="M68.5 330.5 H73" stroke="#555" stroke-width="1"/><rect x="66.5" y="342.5" width="8" height="8" fill="#fff" stroke="#a5a5a5"/><path d="M68.5 346.5 H73" stroke="#555" stroke-width="1"/><rect x="66.5" y="390.5" width="8" height="8" fill="#fff" stroke="#a5a5a5"/><path d="M68.5 394.5 H73" stroke="#555" stroke-width="1"/><rect x="66.5" y="486.5" width="8" height="8" fill="#fff" stroke="#a5a5a5"/><path d="M68.5 490.5 H73" stroke="#555" stroke-width="1"/><rect x="66.5" y="534.5" width="8" height="8" fill="#fff" stroke="#a5a5a5"/><path d="M68.5 538.5 H73" stroke="#555" stroke-width="1"/><rect x="66.5" y="630.5" width="8" height="8" fill="#fff" stroke="#a5a5a5"/><path d="M68.5 634.5 H73" stroke="#555" stroke-width="1"/><path d="M71.5 385.5 H75" stroke="#a5a5a5"/><path d="M71.5 449.5 H75" stroke="#a5a5a5"/><path d="M71.5 593.5 H75" stroke="#a5a5a5"/><path d="M71.5 673.5 H75" stroke="#a5a5a5"/></svg>
<svg class="r" style="left:659px;top:323px" width="14" height="16" viewBox="0 0 14 16"><path d="M3.8 0 H9.2 Q13 0 13 3.6 V6.4 Q13 10 9.2 10 H7 L3.2 15 V10 Q0 9.6 0 6.4 V3.6 Q0 0 3.8 0 Z" fill="#f68b2d"/></svg>
<svg class="r" style="left:659px;top:595px" width="14" height="16" viewBox="0 0 14 16"><path d="M3.8 0 H9.2 Q13 0 13 3.6 V6.4 Q13 10 9.2 10 H7 L3.2 15 V10 Q0 9.6 0 6.4 V3.6 Q0 0 3.8 0 Z" fill="#f68b2d"/></svg>
<div class="r" style="left:675px;top:130px;width:17px;height:567px;background:#e8e8ec;"></div>
<div class="r" style="left:675px;top:130px;width:17px;height:17px;background:#f1f1f4;border-bottom:1px solid #dcdde6;border-left:1px solid #e4e4ea"></div>
<div class="r" style="left:32px;top:128px;width:660px;height:2px;background:#007acc;"></div>
<svg class="r" style="left:677px;top:131px" width="13" height="16" viewBox="0 0 13 16"><path d="M1 7 H12.5 M1 9.7 H12.5" stroke="#111" stroke-width="1.3"/><path d="M6.5 1.2 V14.6" stroke="#111" stroke-width="1.3"/><path d="M4.2 3.8 L6.5 1.2 L8.8 3.8 M4.2 12 L6.5 14.6 L8.8 12" fill="none" stroke="#111" stroke-width="1.2"/></svg>
<svg class="r" style="left:678px;top:152px" width="11" height="6" viewBox="0 0 11 6"><path d="M0.5 6 L5.5 0.6 L10.5 6 Z" fill="#868399"/></svg>
<div class="r" style="left:679px;top:164px;width:9px;height:218px;background:#d0d1da;"></div>
<svg class="r" style="left:678px;top:685px" width="11" height="6" viewBox="0 0 11 6"><path d="M0.5 0 L5.5 5.4 L10.5 0 Z" fill="#868399"/></svg>
<div class="r" style="left:32px;top:697px;width:660px;height:17px;background:#e8e8ec;"></div>
<div class="r" style="left:32px;top:697px;width:60px;height:17px;background:#fcfcfc;border:1px solid #dcdde4"></div>
<span class="t" style="left:35.0px;top:700.00px;font-size:12.5px;color:#1e1e1e;transform:scaleX(0.8607);">100 %</span>
<svg class="r" style="left:82px;top:704px" width="6" height="4" viewBox="0 0 6 4"><path d="M0 0 H6 L3.0 3.0 Z" fill="#555"/></svg>
<svg class="r" style="left:96px;top:700px" width="6" height="10" viewBox="0 0 6 10"><path d="M5.5 0.5 L0.5 5 L5.5 9.5 Z" fill="#c5c6cf"/></svg>
<svg class="r" style="left:663px;top:700px" width="6" height="10" viewBox="0 0 6 10"><path d="M0.5 0.5 L5.5 5 L0.5 9.5 Z" fill="#c5c6cf"/></svg>
<div class="r" style="left:168px;top:533px;width:128px;height:156px;background:#f6f6f6;border:1px solid #e6e7ea"></div>
<div class="r" style="left:189px;top:534px;width:89px;height:19px;background:#3399ff;"></div>
<span class="t" style="left:191.0px;top:538.00px;font-size:12.5px;color:#fff;transform:scaleX(1.0467);">/div&gt;</span>
<svg class="r" style="left:171px;top:538.8px" width="15" height="8" viewBox="0 0 15 8"><rect x="0.5" y="0.5" width="13.5" height="6.6" fill="#f6f6f6" stroke="#3a3a3a"/><path d="M5.2 2 L3.2 3.8 L5.2 5.6 M9.2 2 L11.2 3.8 L9.2 5.6" fill="none" stroke="#3a3a3a" stroke-width="1"/></svg>
<span class="t" style="left:191.0px;top:557.00px;font-size:12.5px;color:#1e1e1e;transform:scaleX(0.9286);">a</span>
<svg class="r" style="left:171px;top:554.8px" width="16" height="15" viewBox="0 0 16 15"><path d="M4.5 8 V1.5 H10.5 L13.5 4.5 V6" fill="none" stroke="#3a3a3a" stroke-width="1.1"/><path d="M13.5 8 V9 M13.5 11 V12" stroke="#3a3a3a" stroke-width="1.1"/><rect x="0.5" y="8.5" width="9.6" height="5.6" fill="#f6f6f6" stroke="#3a3a3a"/><path d="M4 9.8 L2.5 11.3 L4 12.8 M6.6 9.8 L8.1 11.3 L6.6 12.8" fill="none" stroke="#3a3a3a" stroke-width="0.9"/></svg>
<span class="t" style="left:191.0px;top:576.00px;font-size:12.5px;color:#1e1e1e;transform:scaleX(0.9600);">abbr</span>
<svg class="r" style="left:171px;top:573.8px" width="16" height="15" viewBox="0 0 16 15"><path d="M4.5 8 V1.5 H10.5 L13.5 4.5 V6" fill="none" stroke="#3a3a3a" stroke-width="1.1"/><path d="M13.5 8 V9 M13.5 11 V12" stroke="#3a3a3a" stroke-width="1.1"/><rect x="0.5" y="8.5" width="9.6" height="5.6" fill="#f6f6f6" stroke="#3a3a3a"/><path d="M4 9.8 L2.5 11.3 L4 12.8 M6.6 9.8 L8.1 11.3 L6.6 12.8" fill="none" stroke="#3a3a3a" stroke-width="0.9"/></svg>
<span class="t" style="left:191.0px;top:595.00px;font-size:12.5px;color:#1e1e1e;transform:scaleX(0.9700);">acronym</span>
<svg class="r" style="left:171px;top:592.8px" width="16" height="15" viewBox="0 0 16 15"><path d="M4.5 8 V1.5 H10.5 L13.5 4.5 V6" fill="none" stroke="#3a3a3a" stroke-width="1.1"/><path d="M13.5 8 V9 M13.5 11 V12" stroke="#3a3a3a" stroke-width="1.1"/><rect x="0.5" y="8.5" width="9.6" height="5.6" fill="#f6f6f6" stroke="#3a3a3a"/><path d="M4 9.8 L2.5 11.3 L4 12.8 M6.6 9.8 L8.1 11.3 L6.6 12.8" fill="none" stroke="#3a3a3a" stroke-width="0.9"/></svg>
<span class="t" style="left:191.0px;top:614.00px;font-size:12.5px;color:#1e1e1e;transform:scaleX(0.8989);">address</span>
<svg class="r" style="left:171px;top:611.8px" width="16" height="15" viewBox="0 0 16 15"><path d="M4.5 8 V1.5 H10.5 L13.5 4.5 V6" fill="none" stroke="#3a3a3a" stroke-width="1.1"/><path d="M13.5 8 V9 M13.5 11 V12" stroke="#3a3a3a" stroke-width="1.1"/><rect x="0.5" y="8.5" width="9.6" height="5.6" fill="#f6f6f6" stroke="#3a3a3a"/><path d="M4 9.8 L2.5 11.3 L4 12.8 M6.6 9.8 L8.1 11.3 L6.6 12.8" fill="none" stroke="#3a3a3a" stroke-width="0.9"/></svg>
<span class="t" style="left:191.0px;top:633.00px;font-size:12.5px;color:#1e1e1e;transform:scaleX(0.9514);">b</span>
<svg class="r" style="left:171px;top:630.8px" width="16" height="15" viewBox="0 0 16 15"><path d="M4.5 8 V1.5 H10.5 L13.5 4.5 V6" fill="none" stroke="#3a3a3a" stroke-width="1.1"/><path d="M13.5 8 V9 M13.5 11 V12" stroke="#3a3a3a" stroke-width="1.1"/><rect x="0.5" y="8.5" width="9.6" height="5.6" fill="#f6f6f6" stroke="#3a3a3a"/><path d="M4 9.8 L2.5 11.3 L4 12.8 M6.6 9.8 L8.1 11.3 L6.6 12.8" fill="none" stroke="#3a3a3a" stroke-width="0.9"/></svg>
<span class="t" style="left:191.0px;top:652.00px;font-size:12.5px;color:#1e1e1e;transform:scaleX(1.0060);">bdo</span>
<svg class="r" style="left:171px;top:649.8px" width="16" height="15" viewBox="0 0 16 15"><path d="M4.5 8 V1.5 H10.5 L13.5 4.5 V6" fill="none" stroke="#3a3a3a" stroke-width="1.1"/><path d="M13.5 8 V9 M13.5 11 V12" stroke="#3a3a3a" stroke-width="1.1"/><rect x="0.5" y="8.5" width="9.6" height="5.6" fill="#f6f6f6" stroke="#3a3a3a"/><path d="M4 9.8 L2.5 11.3 L4 12.8 M6.6 9.8 L8.1 11.3 L6.6 12.8" fill="none" stroke="#3a3a3a" stroke-width="0.9"/></svg>
<span class="t" style="left:191.0px;top:671.00px;font-size:12.5px;color:#1e1e1e;transform:scaleX(1.0187);">big</span>
<svg class="r" style="left:171px;top:668.8px" width="16" height="15" viewBox="0 0 16 15"><path d="M4.5 8 V1.5 H10.5 L13.5 4.5 V6" fill="none" stroke="#3a3a3a" stroke-width="1.1"/><path d="M13.5 8 V9 M13.5 11 V12" stroke="#3a3a3a" stroke-width="1.1"/><rect x="0.5" y="8.5" width="9.6" height="5.6" fill="#f6f6f6" stroke="#3a3a3a"/><path d="M4 9.8 L2.5 11.3 L4 12.8 M6.6 9.8 L8.1 11.3 L6.6 12.8" fill="none" stroke="#3a3a3a" stroke-width="0.9"/></svg>
<div class="r" style="left:278px;top:534px;width:18px;height:155px;background:#e8e8ec;"></div>
<svg class="r" style="left:281px;top:540px" width="10" height="6" viewBox="0 0 10 6"><path d="M0 5.5 L5 0.5 L10 5.5 Z" fill="#868999"/></svg>
<div class="r" style="left:282px;top:551px;width:8px;height:20px;background:#c9cad3;"></div>
<div class="r" style="left:168px;top:689px;width:170px;height:2px;background:#e9e9ec;"></div>
<div class="r" style="left:31px;top:715px;width:668px;height:24px;background:#f6f6f6;"></div>
<div class="r" style="left:35px;top:716px;width:68px;height:21px;background:#f5f5f5;border:1px solid #4a9be8"></div>
<svg class="r" style="left:42px;top:722px" width="10" height="8" viewBox="0 0 10 8"><path d="M3 2.6 L0.6 4.6 L3 6.6 M4.6 2.6 L7 4.6 L4.6 6.6" fill="none" stroke="#333" stroke-width="1.2"/></svg>
<span class="t" style="left:56.5px;top:721.00px;font-size:12.5px;color:#1e1e1e;transform:scaleX(0.8959);">Source</span>
<div class="r" style="left:126px;top:716px;width:12px;height:21px;background:#f5f5f5;border:1px solid #7a7a7a"></div>
<svg class="r" style="left:129px;top:722px" width="6" height="9" viewBox="0 0 6 9"><path d="M5.5 0 L0.5 4.5 L5.5 9 Z" fill="#444"/></svg>
<div class="r" style="left:141px;top:716px;width:162px;height:21px;background:#f5f5f5;border:1px solid #7a7a7a"></div>
<span class="t" style="left:145.5px;top:721.00px;font-size:12.5px;color:#1e1e1e;transform:scaleX(0.9513);">&lt;div.logon grid_8 push_2 ...&gt;</span>
<div class="r" style="left:306px;top:716px;width:106px;height:21px;background:#f5f5f5;border:1px solid #7a7a7a"></div>
<span class="t" style="left:311.0px;top:721.00px;font-size:12.5px;color:#1e1e1e;transform:scaleX(0.9418);">&lt;div.grid_5 alpha&gt;</span>
<span class="t" style="left:420.0px;top:721.00px;font-size:12.5px;color:#1e1e1e;transform:scaleX(0.9901);">&lt;div.editor-label&gt;</span>
<div class="r" style="left:520px;top:716px;width:102px;height:21px;background:#f5f5f5;border:1px solid #7a7a7a"></div>
<span class="t" style="left:526.0px;top:721.00px;font-size:12.5px;color:#1e1e1e;transform:scaleX(0.9691);">&lt;div.editor-label&gt;</span>
<div class="r" style="left:670px;top:716px;width:12px;height:21px;background:#f5f5f5;border:1px solid #7a7a7a"></div>
<svg class="r" style="left:673px;top:722px" width="6" height="9" viewBox="0 0 6 9"><path d="M0.5 0 L5.5 4.5 L0.5 9 Z" fill="#444"/></svg>
<span class="t" style="left:702.4px;top:114.00px;font-size:12.5px;color:#1e1e1e;transform:scaleX(0.9048);">Code Review Board</span>
<svg class="r" style="left:811px;top:117px" width="152" height="5" viewBox="0 0 152 5"><rect x="0" y="0" width="1" height="1" fill="#a6a6ad"/><rect x="4" y="0" width="1" height="1" fill="#a6a6ad"/><rect x="8" y="0" width="1" height="1" fill="#a6a6ad"/><rect x="12" y="0" width="1" height="1" fill="#a6a6ad"/><rect x="16" y="0" width="1" height="1" fill="#a6a6ad"/><rect x="20" y="0" width="1" height="1" fill="#a6a6ad"/><rect x="24" y="0" width="1" height="1" fill="#a6a6ad"/><rect x="28" y="0" width="1" height="1" fill="#a6a6ad"/><rect x="32" y="0" width="1" height="1" fill="#a6a6ad"/><rect x="36" y="0" width="1" height="1" fill="#a6a6ad"/><rect x="40" y="0" width="1" height="1" fill="#a6a6ad"/><rect x="44" y="0" width="1" height="1" fill="#a6a6ad"/><rect x="48" y="0" width="1" height="1" fill="#a6a6ad"/><rect x="52" y="0" width="1" height="1" fill="#a6a6ad"/><rect x="56" y="0" width="1" height="1" fill="#a6a6ad"/><rect x="60" y="0" width="1" height="1" fill="#a6a6ad"/><rect x="64" y="0" width="1" height="1" fill="#a6a6ad"/><rect x="68" y="0" width="1" height="1" fill="#a6a6ad"/><rect x="72" y="0" width="1" height="1" fill="#a6a6ad"/><rect x="76" y="0" width="1" height="1" fill="#a6a6ad"/><rect x="80" y="0" width="1" height="1" fill="#a6a6ad"/><rect x="84" y="0" width="1" height="1" fill="#a6a6ad"/><rect x="88" y="0" width="1" height="1" fill="#a6a6ad"/><rect x="92" y="0" width="1" height="1" fill="#a6a6ad"/><rect x="96" y="0" width="1" height="1" fill="#a6a6ad"/><rect x="100" y="0" width="1" height="1" fill="#a6a6ad"/><rect x="104" y="0" width="1" height="1" fill="#a6a6ad"/><rect x="108" y="0" width="1" height="1" fill="#a6a6ad"/><rect x="112" y="0" width="1" height="1" fill="#a6a6ad"/><rect x="116" y="0" width="1" height="1" fill="#a6a6ad"/><rect x="120" y="0" width="1" height="1" fill="#a6a6ad"/><rect x="124" y="0" width="1" height="1" fill="#a6a6ad"/><rect x="128" y="0" width="1" height="1" fill="#a6a6ad"/><rect x="132" y="0" width="1" height="1" fill="#a6a6ad"/><rect x="136" y="0" width="1" height="1" fill="#a6a6ad"/><rect x="140" y="0" width="1" height="1" fill="#a6a6ad"/><rect x="144" y="0" width="1" height="1" fill="#a6a6ad"/><rect x="148" y="0" width="1" height="1" fill="#a6a6ad"/><rect x="2" y="2" width="1" height="1" fill="#a6a6ad"/><rect x="6" y="2" width="1" height="1" fill="#a6a6ad"/><rect x="10" y="2" width="1" height="1" fill="#a6a6ad"/><rect x="14" y="2" width="1" height="1" fill="#a6a6ad"/><rect x="18" y="2" width="1" height="1" fill="#a6a6ad"/><rect x="22" y="2" width="1" height="1" fill="#a6a6ad"/><rect x="26" y="2" width="1" height="1" fill="#a6a6ad"/><rect x="30" y="2" width="1" height="1" fill="#a6a6ad"/><rect x="34" y="2" width="1" height="1" fill="#a6a6ad"/><rect x="38" y="2" width="1" height="1" fill="#a6a6ad"/><rect x="42" y="2" width="1" height="1" fill="#a6a6ad"/><rect x="46" y="2" width="1" height="1" fill="#a6a6ad"/><rect x="50" y="2" width="1" height="1" fill="#a6a6ad"/><rect x="54" y="2" width="1" height="1" fill="#a6a6ad"/><rect x="58" y="2" width="1" height="1" fill="#a6a6ad"/><rect x="62" y="2" width="1" height="1" fill="#a6a6ad"/><rect x="66" y="2" width="1" height="1" fill="#a6a6ad"/><rect x="70" y="2" width="1" height="1" fill="#a6a6ad"/><rect x="74" y="2" width="1" height="1" fill="#a6a6ad"/><rect x="78" y="2" width="1" height="1" fill="#a6a6ad"/><rect x="82" y="2" width="1" height="1" fill="#a6a6ad"/><rect x="86" y="2" width="1" height="1" fill="#a6a6ad"/><rect x="90" y="2" width="1" height="1" fill="#a6a6ad"/><rect x="94" y="2" width="1" height="1" fill="#a6a6ad"/><rect x="98" y="2" width="1" height="1" fill="#a6a6ad"/><rect x="102" y="2" width="1" height="1" fill="#a6a6ad"/><rect x="106" y="2" width="1" height="1" fill="#a6a6ad"/><rect x="110" y="2" width="1" height="1" fill="#a6a6ad"/><rect x="114" y="2" width="1" height="1" fill="#a6a6ad"/><rect x="118" y="2" width="1" height="1" fill="#a6a6ad"/><rect x="122" y="2" width="1" height="1" fill="#a6a6ad"/><rect x="126" y="2" width="1" height="1" fill="#a6a6ad"/><rect x="130" y="2" width="1" height="1" fill="#a6a6ad"/><rect x="134" y="2" width="1" height="1" fill="#a6a6ad"/><rect x="138" y="2" width="1" height="1" fill="#a6a6ad"/><rect x="142" y="2" width="1" height="1" fill="#a6a6ad"/><rect x="146" y="2" width="1" height="1" fill="#a6a6ad"/><rect x="150" y="2" width="1" height="1" fill="#a6a6ad"/><rect x="0" y="4" width="1" height="1" fill="#a6a6ad"/><rect x="4" y="4" width="1" height="1" fill="#a6a6ad"/><rect x="8" y="4" width="1" height="1" fill="#a6a6ad"/><rect x="12" y="4" width="1" height="1" fill="#a6a6ad"/><rect x="16" y="4" width="1" height="1" fill="#a6a6ad"/><rect x="20" y="4" width="1" height="1" fill="#a6a6ad"/><rect x="24" y="4" width="1" height="1" fill="#a6a6ad"/><rect x="28" y="4" width="1" height="1" fill="#a6a6ad"/><rect x="32" y="4" width="1" height="1" fill="#a6a6ad"/><rect x="36" y="4" width="1" height="1" fill="#a6a6ad"/><rect x="40" y="4" width="1" height="1" fill="#a6a6ad"/><rect x="44" y="4" width="1" height="1" fill="#a6a6ad"/><rect x="48" y="4" width="1" height="1" fill="#a6a6ad"/><rect x="52" y="4" width="1" height="1" fill="#a6a6ad"/><rect x="56" y="4" width="1" height="1" fill="#a6a6ad"/><rect x="60" y="4" width="1" height="1" fill="#a6a6ad"/><rect x="64" y="4" width="1" height="1" fill="#a6a6ad"/><rect x="68" y="4" width="1" height="1" fill="#a6a6ad"/><rect x="72" y="4" width="1" height="1" fill="#a6a6ad"/><rect x="76" y="4" width="1" height="1" fill="#a6a6ad"/><rect x="80" y="4" width="1" height="1" fill="#a6a6ad"/><rect x="84" y="4" width="1" height="1" fill="#a6a6ad"/><rect x="88" y="4" width="1" height="1" fill="#a6a6ad"/><rect x="92" y="4" width="1" height="1" fill="#a6a6ad"/><rect x="96" y="4" width="1" height="1" fill="#a6a6ad"/><rect x="100" y="4" width="1" height="1" fill="#a6a6ad"/><rect x="104" y="4" width="1" height="1" fill="#a6a6ad"/><rect x="108" y="4" width="1" height="1" fill="#a6a6ad"/><rect x="112" y="4" width="1" height="1" fill="#a6a6ad"/><rect x="116" y="4" width="1" height="1" fill="#a6a6ad"/><rect x="120" y="4" width="1" height="1" fill="#a6a6ad"/><rect x="124" y="4" width="1" height="1" fill="#a6a6ad"/><rect x="128" y="4" width="1" height="1" fill="#a6a6ad"/><rect x="132" y="4" width="1" height="1" fill="#a6a6ad"/><rect x="136" y="4" width="1" height="1" fill="#a6a6ad"/><rect x="140" y="4" width="1" height="1" fill="#a6a6ad"/><rect x="144" y="4" width="1" height="1" fill="#a6a6ad"/><rect x="148" y="4" width="1" height="1" fill="#a6a6ad"/></svg>
<svg class="r" style="left:970px;top:117px" width="8" height="4" viewBox="0 0 8 4"><path d="M0 0 H8 L4.0 4.0 Z" fill="#1e1e1e"/></svg>
<svg class="r" style="left:985px;top:113px" width="11" height="13" viewBox="0 0 11 13"><path d="M3.6 1.2 H8 V7.4 M3.6 1.2 V7.4" fill="none" stroke="#111" stroke-width="1.1"/><rect x="6.2" y="1.2" width="1.9" height="6.2" fill="#111"/><path d="M2 7.6 H9.4" stroke="#111" stroke-width="1.3"/><path d="M5.6 8 V12.2" stroke="#111" stroke-width="1.2"/></svg>
<svg class="r" style="left:1001px;top:114px" width="12" height="10" viewBox="0 0 12 10"><path d="M1.3 0.9 L10.9 9 M10.9 0.9 L1.3 9" stroke="#1e1e1e" stroke-width="1.6"/></svg>
<svg class="r" style="left:704px;top:135px" width="14" height="14" viewBox="0 0 14 14"><path d="M5.39 10.44 A3.8 3.8 0 0 1 4.46 4.18" fill="none" stroke="#2a2a2a" stroke-width="2.6"/><path d="M2.65 2.17 L6.69 2.17 L6.26 6.18 Z" fill="#2a2a2a"/><path d="M8.61 3.56 A3.8 3.8 0 0 1 9.54 9.82" fill="none" stroke="#2a2a2a" stroke-width="2.6"/><path d="M11.35 11.83 L7.31 11.83 L7.74 7.82 Z" fill="#2a2a2a"/></svg>
<svg class="r" style="left:725px;top:134px" width="16" height="16" viewBox="0 0 16 16"><rect x="2.6" y="1.6" width="11" height="12.6" fill="#f4f4f6" stroke="#2a2a2a" stroke-width="1.2"/><path d="M7.5 3.6 H12 M7.5 5.5 H12 M6 7.6 H12 M4.5 9.6 H12" stroke="#2a2a2a" stroke-width="0.9"/><rect x="0" y="0" width="7.6" height="7.4" fill="#eeeef2"/><path d="M1 4 H7 M4 1 V7" stroke="#1e8a1e" stroke-width="2.2"/></svg>
<div class="r" style="left:746px;top:133px;width:1px;height:19px;background:#cccedb;"></div>
<svg class="r" style="left:752px;top:134px" width="16" height="16" viewBox="0 0 16 16"><rect x="-1.5" y="-7" width="3" height="14" fill="#2a2a2a" transform="translate(8 8.2) rotate(0.0)"/><rect x="-1.5" y="-7" width="3" height="14" fill="#2a2a2a" transform="translate(8 8.2) rotate(45.0)"/><rect x="-1.5" y="-7" width="3" height="14" fill="#2a2a2a" transform="translate(8 8.2) rotate(90.0)"/><rect x="-1.5" y="-7" width="3" height="14" fill="#2a2a2a" transform="translate(8 8.2) rotate(135.0)"/><circle cx="8" cy="8.2" r="5.18" fill="#2a2a2a"/><circle cx="8" cy="8.2" r="2.94" fill="#f1f1f4"/><circle cx="8" cy="8.2" r="1.33" fill="#555"/></svg>
<svg class="r" style="left:774px;top:135px" width="14" height="14" viewBox="0 0 14 14"><rect x="0.8" y="0.8" width="12" height="12" fill="#f4f4f6" stroke="#2a2a2a" stroke-width="1.4"/><path d="M1 5 H13" stroke="#2a2a2a" stroke-width="1.2"/></svg>
<svg class="r" style="left:791px;top:141px" width="7" height="4" viewBox="0 0 7 4"><path d="M0 0 H7 L3.5 3.5 Z" fill="#1e1e1e"/></svg>
<div class="r" style="left:802px;top:133px;width:1px;height:19px;background:#cccedb;"></div>
<svg class="r" style="left:809px;top:135px" width="15" height="15" viewBox="0 0 15 15"><path d="M4.5 3.5 V1 H14 V9.5 H11.5" fill="none" stroke="#2a2a2a" stroke-width="1.3"/><path d="M4.8 2 H14" stroke="#2a2a2a" stroke-width="2"/><rect x="1" y="4.6" width="9.6" height="8.8" fill="#f4f4f6" stroke="#2a2a2a" stroke-width="1.3"/><path d="M1 5.6 H10.6" stroke="#2a2a2a" stroke-width="2"/><rect x="3.4" y="8.6" width="4.8" height="2.6" fill="none" stroke="#2a2a2a" stroke-width="0.9"/></svg>
<svg class="r" style="left:830px;top:134px" width="17" height="16" viewBox="0 0 17 16"><path d="M4 1.4 H12 Q15 1.4 15 4.6 V7.4 Q15 10.6 12 10.6 H8 L4 14.6 L4.6 10.6 Q1 10.2 1 7.4 V4.6 Q1 1.4 4 1.4 Z" fill="#c9c9c9" stroke="#3a3a3a" stroke-width="1.1"/><path d="M4.8 5.2 H12.6 L9.6 8.6 V12.4 L7.8 11.4 V8.6 Z" fill="#2a2a2a"/></svg>
<span class="t" style="left:862.5px;top:137.00px;font-size:12.5px;color:#1e1e1e;transform:scaleX(0.8928);">Filter:</span>
<div class="r" style="left:893px;top:132px;width:119px;height:21px;background:#fcfcfc;border:1px solid #dbdde6"></div>
<span class="t" style="left:897.0px;top:137.00px;font-size:12.5px;color:#1e1e1e;transform:scaleX(0.9289);">All reviews</span>
<svg class="r" style="left:1002px;top:140px" width="6" height="4" viewBox="0 0 6 4"><path d="M0 0 H6 L3.0 3.0 Z" fill="#666"/></svg>
<div class="r" style="left:699px;top:158px;width:319px;height:20px;background:#fcfcfc;border:1px solid #dbdde6"></div>
<span class="t" style="left:704.0px;top:162.00px;font-size:12.5px;color:#6d6d6d;transform:scaleX(0.8600);">Search...</span>
<svg class="r" style="left:1001px;top:160px" width="16" height="16" viewBox="0 0 16 16"><circle cx="10" cy="5.6" r="3.6" fill="none" stroke="#5a5a5a" stroke-width="1.8"/><path d="M7.4 8.4 L2.4 13.4" stroke="#5a5a5a" stroke-width="2.4" stroke-linecap="round"/></svg>
<div class="r" style="left:698px;top:180px;width:320px;height:539px;background:#f6f6f6;"></div>
<svg class="r" style="left:703px;top:184px" width="15" height="13" viewBox="0 0 15 13"><path d="M0.8 6 L7 0.6 V4 H13 V8 H7 V11.4 Z" fill="#0e7ad0"/></svg>
<div class="r" style="left:721px;top:182px;width:1px;height:16px;background:#5e5e5e;"></div>
<span class="t" style="left:727.4px;top:185.00px;font-size:12.5px;color:#717171;transform:scaleX(0.9316);">Complete Review</span>
<div class="r" style="left:823px;top:182px;width:1px;height:16px;background:#5e5e5e;"></div>
<span class="t" style="left:829.0px;top:185.00px;font-size:12.5px;color:#717171;transform:scaleX(0.8902);">Restart Review</span>
<div class="r" style="left:909px;top:182px;width:1px;height:16px;background:#5e5e5e;"></div>
<span class="t" style="left:915.4px;top:185.00px;font-size:12.5px;color:#0e70c0;transform:scaleX(0.9113);">Add Revisions...</span>
<div class="r" style="left:1001px;top:204px;width:17px;height:514px;background:#e8e8ec;"></div>
<svg class="r" style="left:1004.5px;top:209px" width="10" height="6" viewBox="0 0 10 6"><path d="M0 5.5 L5 0.5 L10 5.5 Z" fill="#868999"/></svg>
<div class="r" style="left:1005px;top:326px;width:9px;height:375px;background:#c4c5d0;"></div>
<svg class="r" style="left:1005px;top:707px" width="10" height="6" viewBox="0 0 10 6"><path d="M0 0.5 L5 5.5 L10 0.5 Z" fill="#868999"/></svg>
<div class="r" style="left:744px;top:204px;width:252px;height:5px;background:#e2e2e5;"></div>
<span class="t" style="left:749.0px;top:217.00px;font-size:12.5px;color:#1e1e1e;transform:scaleX(0.9550);">John Howell</span>
<div class="r" style="left:916px;top:219px;width:6px;height:7px;background:#3c8c3c;"></div>
<span class="t" style="left:927.3px;top:217.00px;font-size:12.5px;color:#717171;transform:scaleX(0.9535);">Accepted</span>
<span class="t" style="left:749.0px;top:246.00px;font-size:12.5px;color:#8a8a8a;transform:scaleX(0.9253);">Add Reviewer</span>
<svg class="r" style="left:721px;top:271px" width="7" height="7" viewBox="0 0 7 7"><path d="M6.5 0.5 V6.5 H0.5 Z" fill="#1e1e1e"/></svg>
<span class="t" style="left:732.0px;top:269.00px;font-size:12.5px;color:#1e1e1e;transform:scaleX(0.8989);">Changes</span>
<span class="t" style="left:732.2px;top:292.00px;font-size:12.5px;color:#0e70c0;transform:scaleX(0.9763);">Add file</span>
<div class="r" style="left:777px;top:290px;width:1px;height:15px;background:#7a7a7a;"></div>
<span class="t" style="left:783.0px;top:292.00px;font-size:12.5px;color:#0e70c0;transform:scaleX(0.9359);">Delete file</span>
<div class="r" style="left:733px;top:308px;width:263px;height:50px;background:#f6f6f6;border:1px solid #dcdde3"></div>
<div class="r" style="left:735px;top:310px;width:259px;height:15px;background:#cccedb;"></div>
<span class="t" style="left:745.0px;top:312.00px;font-size:12.5px;color:#1e1e1e;transform:scaleX(0.9771);">AccountController.cs</span>
<span class="t" style="left:745.0px;top:327.00px;font-size:12.5px;color:#1e1e1e;transform:scaleX(0.9724);">LogOn.cshtml</span>
<span class="t" style="left:745.0px;top:342.00px;font-size:12.5px;color:#1e1e1e;transform:scaleX(0.9446);">Register.cshtml</span>
<span class="t" style="left:715.0px;top:363.00px;font-size:12.5px;color:#0e70c0;transform:scaleX(0.9545);">Add General Comment</span>
<div class="r" style="left:841px;top:361px;width:1px;height:16px;background:#7a7a7a;"></div>
<span class="t" style="left:847.0px;top:363.00px;font-size:12.5px;color:#717171;transform:scaleX(0.9745);">Authored by Me</span>
<div class="r" style="left:937px;top:361px;width:1px;height:16px;background:#7a7a7a;"></div>
<span class="t" style="left:942.6px;top:363.00px;font-size:12.5px;color:#717171;transform:scaleX(0.9397);">Just now</span>
<div class="r" style="left:698px;top:384px;width:303px;height:1px;background:#a8a8a8;"></div>
<svg class="r" style="left:703px;top:392.5px" width="7" height="10" viewBox="0 0 7 10"><path d="M1 0.8 L6 5 L1 9.2 Z" fill="none" stroke="#1e1e1e" stroke-width="1"/></svg>
<span class="t" style="left:716.8px;top:392.00px;font-size:12.5px;color:#717171; font-weight:700;transform:scaleX(0.9024);">Anthony Robinson</span>
<span class="t" style="left:823.5px;top:392.00px;font-size:12.5px;color:#717171;transform:scaleX(0.9046);">(1 reply)</span>
<div class="r" style="left:928px;top:389px;width:37px;height:16px;background:#f28b30;"></div>
<span class="t" style="left:934.0px;top:391.00px;font-size:12.5px;color:#fff;transform:scaleX(0.8507);">Open</span>
<span class="t" style="left:716.8px;top:407.00px;font-size:12.5px;color:#1e1e1e;transform:scaleX(0.9530);">Why there is no &#x27;User Name&#x27; field in the registration</span>
<span class="t" style="left:716.8px;top:422.00px;font-size:12.5px;color:#1e1e1e;transform:scaleX(0.9769);">form?</span>
<span class="t" style="left:715.2px;top:440.00px;font-size:12.5px;color:#1c73c4;transform:scaleX(0.9457);">Register.cshtml</span>
<div class="r" style="left:800px;top:438px;width:1px;height:16px;background:#7a7a7a;"></div>
<span class="t" style="left:806.5px;top:440.00px;font-size:12.5px;color:#1c73c4;transform:scaleX(0.9018);">Close</span>
<div class="r" style="left:698px;top:456px;width:303px;height:1px;background:#a8a8a8;"></div>
<svg class="r" style="left:703px;top:464.5px" width="7" height="10" viewBox="0 0 7 10"><path d="M1 0.8 L6 5 L1 9.2 Z" fill="none" stroke="#1e1e1e" stroke-width="1"/></svg>
<span class="t" style="left:716.8px;top:464.00px;font-size:12.5px;color:#717171; font-weight:700;transform:scaleX(0.9263);">John Howell</span>
<span class="t" style="left:790.5px;top:464.00px;font-size:12.5px;color:#717171;transform:scaleX(0.9046);">(1 reply)</span>
<div class="r" style="left:881px;top:461px;width:35px;height:16px;background:#388e3c;"></div>
<span class="t" style="left:885.5px;top:463.00px;font-size:12.5px;color:#fff;transform:scaleX(0.8507);">Fixed</span>
<div class="r" style="left:924px;top:461px;width:41px;height:16px;background:#a52a2a;"></div>
<span class="t" style="left:928.5px;top:463.00px;font-size:12.5px;color:#fff;transform:scaleX(0.8858);">Defect</span>
<span class="t" style="left:716.8px;top:479.00px;font-size:12.5px;color:#1e1e1e;transform:scaleX(0.9468);">You need to redirect a user to the previous page</span>
<span class="t" style="left:716.8px;top:494.00px;font-size:12.5px;color:#1e1e1e;transform:scaleX(0.9596);">after the registration</span>
<span class="t" style="left:715.2px;top:512.00px;font-size:12.5px;color:#1c73c4;transform:scaleX(0.9727);">AccountController.cs</span>
<div class="r" style="left:831px;top:510px;width:1px;height:16px;background:#7a7a7a;"></div>
<span class="t" style="left:837.6px;top:512.00px;font-size:12.5px;color:#1c73c4;transform:scaleX(0.8993);">Reopen</span>
<div class="r" style="left:698px;top:528px;width:303px;height:1px;background:#a8a8a8;"></div>
<svg class="r" style="left:703px;top:536.5px" width="7" height="10" viewBox="0 0 7 10"><path d="M1 0.8 L6 5 L1 9.2 Z" fill="none" stroke="#1e1e1e" stroke-width="1"/></svg>
<span class="t" style="left:716.8px;top:536.00px;font-size:12.5px;color:#717171; font-weight:700;transform:scaleX(0.9024);">Anthony Robinson</span>
<span class="t" style="left:823.5px;top:536.00px;font-size:12.5px;color:#717171;transform:scaleX(0.9046);">(1 reply)</span>
<div class="r" style="left:922px;top:533px;width:43px;height:16px;background:#7a7a7a;"></div>
<span class="t" style="left:926.5px;top:535.00px;font-size:12.5px;color:#fff;transform:scaleX(0.8732);">Closed</span>
<span class="t" style="left:716.8px;top:551.00px;font-size:12.5px;color:#1e1e1e;transform:scaleX(0.9649);">Consider adding captcha to prevent robotic</span>
<span class="t" style="left:716.8px;top:566.00px;font-size:12.5px;color:#1e1e1e;transform:scaleX(0.9691);">registration</span>
<span class="t" style="left:715.2px;top:584.00px;font-size:12.5px;color:#1c73c4;transform:scaleX(0.9457);">Register.cshtml</span>
<div class="r" style="left:800px;top:582px;width:1px;height:16px;background:#7a7a7a;"></div>
<span class="t" style="left:806.5px;top:584.00px;font-size:12.5px;color:#1c73c4;transform:scaleX(0.8924);">Reopen</span>
<div class="r" style="left:698px;top:600px;width:303px;height:1px;background:#a8a8a8;"></div>
<svg class="r" style="left:703px;top:608.5px" width="7" height="10" viewBox="0 0 7 10"><path d="M1 0.8 L6 5 L1 9.2 Z" fill="none" stroke="#1e1e1e" stroke-width="1"/></svg>
<span class="t" style="left:716.8px;top:608.00px;font-size:12.5px;color:#717171; font-weight:700;transform:scaleX(0.9083);">Nicole Addison</span>
<div class="r" style="left:922px;top:605px;width:43px;height:16px;background:#7a7a7a;"></div>
<span class="t" style="left:926.5px;top:607.00px;font-size:12.5px;color:#fff;transform:scaleX(0.8732);">Closed</span>
<span class="t" style="left:716.8px;top:623.00px;font-size:12.5px;color:#1e1e1e;transform:scaleX(0.9467);">Review is needed for the AccountController class</span>
<span class="t" style="left:716.8px;top:638.00px;font-size:12.5px;color:#1e1e1e;transform:scaleX(0.9305);">and LogOn and Register views. Registration is</span>
<span class="t" style="left:716.8px;top:653.00px;font-size:12.5px;color:#1e1e1e;transform:scaleX(0.9448);">intentionally made as simple as possible.</span>
<span class="t" style="left:715.2px;top:671.00px;font-size:12.5px;color:#1c73c4;transform:scaleX(0.9084);">Reopen</span>
<div class="r" style="left:698px;top:687px;width:303px;height:1px;background:#a8a8a8;"></div>
<div class="r" style="left:698px;top:719px;width:111px;height:21px;background:#f6f6f6;"></div>
<span class="t" style="left:703.0px;top:723.00px;font-size:12.5px;color:#0e70c0;transform:scaleX(0.9174);">Code Review Board</span>
<div class="r" style="left:809px;top:720px;width:1px;height:18px;background:#cccedb;"></div>
<span class="t" style="left:815.0px;top:723.00px;font-size:12.5px;color:#1e1e1e;transform:scaleX(0.9350);">Solution Explorer</span>
<div class="r" style="left:908px;top:720px;width:1px;height:18px;background:#cccedb;"></div>
<span class="t" style="left:914.5px;top:723.00px;font-size:12.5px;color:#1e1e1e;transform:scaleX(0.9247);">Team Explorer</span>
<svg class="r" style="left:0;top:0" width="1024" height="768"><defs><linearGradient id="fg" x1="0" y1="100" x2="0" y2="723" gradientUnits="userSpaceOnUse"><stop offset="0" stop-color="rgb(146,176,210)" stop-opacity="0.13"/><stop offset="0.5" stop-color="rgb(146,176,210)" stop-opacity="0.32"/><stop offset="1" stop-color="rgb(146,176,210)" stop-opacity="0.52"/></linearGradient></defs><path d="M24.5 100.5 H173.5 V119.5 H695 Q697.5 119.5 697.5 122 V437.5 L713 444.8 L697.5 452 V720.5 Q697.5 723 695 723 H25 Q22.5 723 22.5 720.5 V102.5 Q22.5 100.5 24.5 100.5 Z M31.5 108.5 H164.5 V127.5 H688.5 V714.5 H31.5 Z" fill="url(#fg)" fill-rule="evenodd" stroke="none"/><path d="M24.5 100.5 H173.5 V119.5 H695 Q697.5 119.5 697.5 122 V437.5 L713 444.8 L697.5 452 V720.5 Q697.5 723 695 723 H25 Q22.5 723 22.5 720.5 V102.5 Q22.5 100.5 24.5 100.5 Z" fill="none" stroke="#46658c" stroke-width="1.2"/><path d="M31.5 108.5 H164.5 V127.5 H688.5 V714.5 H31.5 Z" fill="none" stroke="#3f5e86" stroke-width="1.2"/></svg>
<svg class="r" style="left:736px;top:424px" width="44" height="44" viewBox="0 0 44 44"><circle cx="22" cy="21.8" r="19.4" fill="rgba(255,255,255,0.10)" stroke="#d0d0d0" stroke-width="1.5"/><circle cx="22" cy="21.8" r="13.4" fill="rgba(255,255,255,0.08)" stroke="#b8b8b8" stroke-width="1.6"/><circle cx="22" cy="21.8" r="8" fill="rgba(255,255,255,0.08)" stroke="#a6a6a6" stroke-width="1.6"/><circle cx="22" cy="21.8" r="4.5" fill="#f5913a" fill-opacity="0.92"/><path d="M21.3 21 V35.2 L24.4 32.2 L26.8 37 L29 36 L26.7 31.4 H30.8 Z" fill="#fff" stroke="#1e1e1e" stroke-width="1"/></svg>
</body></html>
